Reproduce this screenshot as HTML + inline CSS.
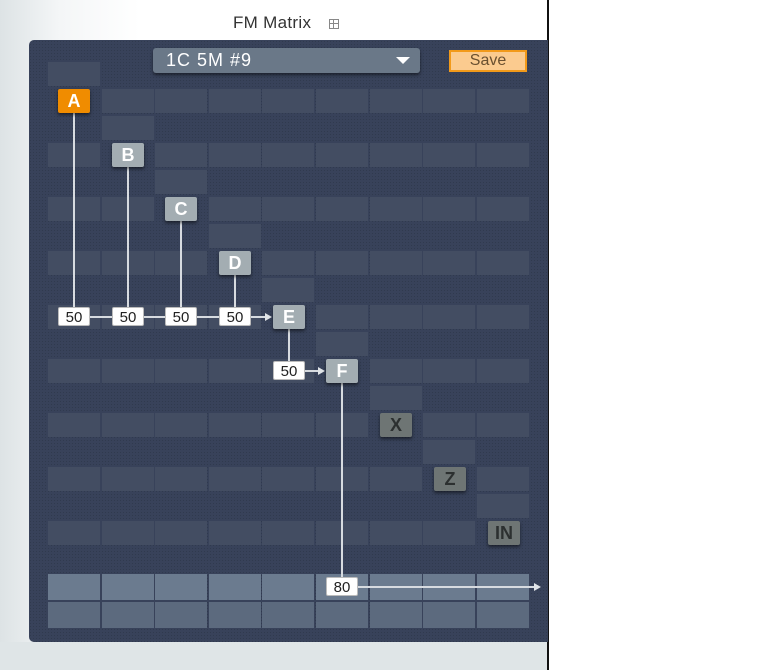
<!DOCTYPE html>
<html><head><meta charset="utf-8"><style>
body{margin:0;width:768px;height:670px;overflow:hidden;background:#fff;font-family:"Liberation Sans",sans-serif;position:relative}
#left{position:absolute;left:0;top:0;width:548px;height:670px;background:linear-gradient(90deg,#dde3e5,#f4f6f7 60px,#fff 140px)}
#bottom{position:absolute;left:0;top:642px;width:548px;height:28px;background:#dfe5e7}
#vline{position:absolute;left:547px;top:0;width:2px;height:670px;background:#111}
#title{position:absolute;left:233px;top:13px;font-size:17px;color:#333;letter-spacing:0.3px}
#ticon{position:absolute;left:329px;top:19px;width:10px;height:10px;border:1px solid #888;box-sizing:border-box}
#ticon:before{content:"";position:absolute;left:3px;top:0;width:1px;height:8px;background:#888}
#ticon:after{content:"";position:absolute;left:0;top:3px;width:8px;height:1px;background:#888}
#panel{position:absolute;left:29px;top:40px;width:519px;height:602px;background-color:#38425a;border-radius:5px 0 0 5px;
background-image:radial-gradient(#303a4e 0.6px,transparent 0.8px);background-size:3px 3px}
.c{position:absolute;width:52px;height:24px;background:#434d62}
.b1{position:absolute;width:52px;height:26px;background:#6b7b8f}
.b2{position:absolute;width:52px;height:26px;background:#5c6a7e}
.op{position:absolute;width:32px;height:24px;line-height:24px;text-align:center;font-weight:bold;font-size:18px;color:#fff;background:#a3adb2;border-radius:2px;box-shadow:0 2px 3px rgba(0,0,0,.5)}
.dk{background:#6e7574;color:#2c3030}
.v{position:absolute;width:32px;height:19px;line-height:19px;text-align:center;font-size:15px;color:#222;background:#fff;border:1px solid #bbb;border-radius:2px;box-sizing:border-box}
.ln{position:absolute;background:#d7dbe0}
.ar{position:absolute;width:0;height:0;border-top:4px solid transparent;border-bottom:4px solid transparent;border-left:7px solid #e0e4e8}
#preset{position:absolute;left:153px;top:48px;width:267px;height:25px;background:#6a7888;border-radius:3px;box-shadow:0 2px 3px rgba(0,0,0,.5);color:#fff;font-size:18px;line-height:25px;padding-left:13px;box-sizing:border-box;letter-spacing:1px}
#tri{position:absolute;left:396px;top:57px;border-left:7px solid transparent;border-right:7px solid transparent;border-top:7px solid #fff}
#save{position:absolute;left:449px;top:50px;width:78px;height:22px;background:#fbcb8f;border:2px solid #f29a1a;box-sizing:border-box;color:#6a5030;font-size:16px;text-align:center;line-height:18px}
</style></head><body>
<div id="left"></div><div id="bottom"></div><div id="vline"></div>
<div id="title">FM Matrix</div><div id="ticon"></div>
<div id="panel"></div>
<div id="cells"></div>
<div id="preset">1C 5M #9</div><div id="tri"></div>
<div id="save">Save</div>
<div id="lines"></div>
<div class="op" style="left:58px;top:89px;background:#f08c00">A</div>
<div class="op" style="left:112px;top:143px">B</div>
<div class="op" style="left:165px;top:197px">C</div>
<div class="op" style="left:219px;top:251px">D</div>
<div class="op" style="left:273px;top:305px">E</div>
<div class="op" style="left:326px;top:359px">F</div>
<div class="op dk" style="left:380px;top:413px">X</div>
<div class="op dk" style="left:434px;top:467px">Z</div>
<div class="op dk" style="left:488px;top:521px">IN</div>
<div class="v" style="left:58px;top:307px">50</div>
<div class="v" style="left:112px;top:307px">50</div>
<div class="v" style="left:165px;top:307px">50</div>
<div class="v" style="left:219px;top:307px">50</div>
<div class="v" style="left:273px;top:361px">50</div>
<div class="v" style="left:326px;top:577px">80</div>
<script>
var h='',x0=48,p=53.6;
for(var i=0;i<9;i++){
  h+='<div class="c" style="left:'+Math.round(x0+p*i)+'px;top:'+(62+54*i)+'px"></div>';
  for(var j=0;j<9;j++){ if(j!=i) h+='<div class="c" style="left:'+Math.round(x0+p*j)+'px;top:'+(89+54*i)+'px"></div>'; }
}
for(var j=0;j<9;j++){
  h+='<div class="b1" style="left:'+Math.round(x0+p*j)+'px;top:574px"></div>';
  h+='<div class="b2" style="left:'+Math.round(x0+p*j)+'px;top:602px"></div>';
}
document.getElementById('cells').innerHTML=h;
var L='';
function ln(x,y,w,hh){L+='<div class="ln" style="left:'+x+'px;top:'+y+'px;width:'+w+'px;height:'+hh+'px"></div>';}
ln(73,113,2,194);ln(127,167,2,140);ln(180,221,2,86);ln(234,275,2,32);
ln(74,316,192,2);L+='<div class="ar" style="left:265px;top:313px"></div>';
ln(288,329,2,32);ln(289,370,30,2);L+='<div class="ar" style="left:318px;top:367px"></div>';
ln(341,383,2,194);ln(358,586,176,2);L+='<div class="ar" style="left:534px;top:583px"></div>';
document.getElementById('lines').innerHTML=L;
</script>
</body></html>
